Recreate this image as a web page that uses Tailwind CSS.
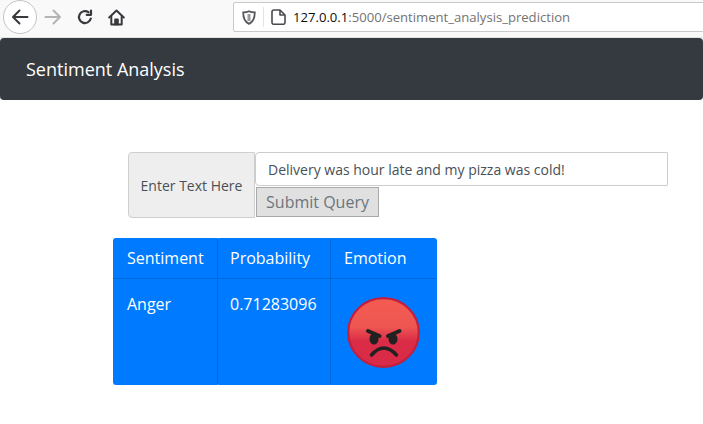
<!DOCTYPE html>
<html lang="en">
<head>
  <meta charset="UTF-8">
  <script src="https://cdn.jsdelivr.net/npm/@tailwindcss/browser@4"></script>
  <title>Sentiment Analysis</title>
</head>
<body class="bg-white font-['Open_Sans',sans-serif] h-[424px] w-[703px] overflow-hidden">

  <!-- browser toolbar -->
  <div class="h-[38px] bg-[#f9f9fa] border-b border-[#e4e4e4] flex items-center pl-[3px] pb-[3px] overflow-hidden">
    <div class="w-[34px] h-[34px] shrink-0 rounded-full border border-[#c4c4c4] bg-white flex items-center justify-center">
      <svg width="18" height="16" viewBox="0 0 18 16" fill="none" stroke="#38383d" stroke-width="2" stroke-linecap="round" stroke-linejoin="round"><path d="M16.500 8H2M8.500 1.500 2 8l6.500 6.500"/></svg>
    </div>
    <svg class="ml-[7px] shrink-0" width="18" height="16" viewBox="0 0 18 16" fill="none" stroke="#b4b4b6" stroke-width="2" stroke-linecap="round" stroke-linejoin="round"><path d="M1.500 8H16M9.500 1.500 16 8l-6.500 6.500"/></svg>
    <svg class="ml-[15px] shrink-0" width="16" height="16" viewBox="0 0 16 16" fill="none" stroke="#38383d" stroke-width="2.200" stroke-linecap="round"><path d="M13.800 9.500A6 6 0 1 1 11.500 3.200"/><path d="M14 1.500v4.300H9.700" stroke-linejoin="round"/></svg>
    <svg class="ml-[15px] shrink-0" width="17" height="17" viewBox="0 0 17 17" fill="none" stroke="#38383d" stroke-width="2" stroke-linejoin="round" stroke-linecap="round"><path d="M1.200 8.500 8.500 1.500l7.300 7"/><path d="M3.300 7.500v8h10.400v-8"/><path d="M7.200 15.500v-5h2.600v5" fill="#38383d"/></svg>
    <div class="ml-[108px] w-[480px] h-[30px] bg-white border border-[#c9c9cb] rounded-[2px] flex items-center shrink-0">
      <svg class="ml-[8px]" width="14" height="15" viewBox="0 0 14 15" fill="none" stroke="#55555a" stroke-width="1.800"><path d="M7 1.200c2 1 3.800 1.100 5.800 1.100 0 5-.8 9.500-5.800 11.500C2 11.800 1.200 7.300 1.200 2.300c2 0 3.800-.1 5.800-1.100z"/><path d="M7 4v7" stroke-width="3" stroke-opacity=".6"/></svg>
      <div class="ml-[7px] w-px h-[20px] bg-[#e4e4e6]"></div>
      <svg class="ml-[7px]" width="15" height="16" viewBox="0 0 15 16" fill="none" stroke="#4a4a4f" stroke-width="1.600" stroke-linejoin="round"><path d="M3 1h6l5 5v7.500a1.800 1.800 0 0 1-1.800 1.800H2.800A1.800 1.800 0 0 1 1 13.500v-10.500A2 2 0 0 1 3 1z"/><path d="M9 1v5h5"/></svg>
      <span class="ml-[7px] pt-px text-[13.1px] leading-none text-[#737373] whitespace-nowrap"><span class="text-[#0c0c0d]">127.0.0.1</span>:5000/sentiment_analysis_prediction</span>
    </div>
  </div>

  <!-- navbar -->
  <nav class="h-[62px] bg-[#343a40] rounded-[4px] flex items-center pl-[26px]">
    <span class="text-white text-[18px]">Sentiment Analysis</span>
  </nav>

  <!-- form -->
  <form class="mt-[52px] ml-[128px] flex w-[540px] h-[66px]">
    <div class="w-[127px] shrink-0 bg-[#eeeeee] border border-[#cfcfcf] rounded-l-[4px] flex items-center justify-center text-[#495057] text-[14px]">Enter Text Here</div>
    <div class="flex-1">
      <input type="text" value="Delivery was hour late and my pizza was cold!" class="block w-[413px] h-[34px] bg-white border border-[#cccccc] rounded-r-[1px] rounded-l-[4px] pl-[12px] text-[#495057] text-[14px]">
      <button type="button" class="block mt-px ml-px w-[123px] h-[30px] bg-[#e0e0e0] border border-[#a9a9a9] text-[#6c757d] text-[16px] leading-none">Submit Query</button>
    </div>
  </form>

  <!-- results -->
  <table class="mt-[20px] ml-[113px] w-[324px] h-[147px] text-white text-[16px] border-separate border-spacing-0 table-fixed">
    <thead>
      <tr class="h-[41px]">
        <th class="w-[105px] bg-[#007bff] rounded-tl-[3px] rounded-tr-[1px] font-normal text-left pl-[14px] border-r border-b border-[#0069d9]">Sentiment</th>
        <th class="w-[113px] bg-[#007bff] rounded-t-[1px] font-normal text-left pl-[12px] border-r border-b border-[#0069d9]">Probability</th>
        <th class="w-[106px] bg-[#007bff] rounded-tr-[3px] font-normal text-left pl-[13px] border-b border-[#0069d9]">Emotion</th>
      </tr>
    </thead>
    <tbody>
      <tr>
        <td class="bg-[#007bff] rounded-bl-[3px] rounded-br-[1px] align-top pt-[13px] pl-[14px] border-r border-[#0069d9]">Anger</td>
        <td class="bg-[#007bff] rounded-b-[1px] align-top pt-[13px] pl-[12px] border-r border-[#0069d9]">0.71283096</td>
        <td class="bg-[#007bff] rounded-br-[3px] align-top pt-[18px] pl-[16px] border-0">
          <svg class="block" width="73" height="71" viewBox="0 0 73 71">
            <defs>
              <linearGradient id="angry" x1="0" y1="0" x2="0" y2="1">
                <stop offset="0.1" stop-color="#f35a52"/>
                <stop offset="0.42" stop-color="#ee5652"/>
                <stop offset="0.62" stop-color="#da2c47"/>
                <stop offset="1" stop-color="#d92b47"/>
              </linearGradient>
            </defs>
            <ellipse cx="36.500" cy="35.500" rx="35.300" ry="34.300" fill="url(#angry)" stroke="#c11f3e" stroke-width="2.200"/>
            <path d="M21 34 32.500 39M52.500 34 41 39" stroke="#212121" stroke-width="4" stroke-linecap="round"/>
            <ellipse cx="27" cy="42" rx="4.500" ry="5.500" fill="#212121"/>
            <ellipse cx="46" cy="42" rx="4.500" ry="5.500" fill="#212121"/>
            <path d="M24.500 58Q36.800 44 49.500 58" fill="none" stroke="#212121" stroke-width="3.500" stroke-linecap="round"/>
          </svg>
        </td>
      </tr>
    </tbody>
  </table>

</body>
</html>
